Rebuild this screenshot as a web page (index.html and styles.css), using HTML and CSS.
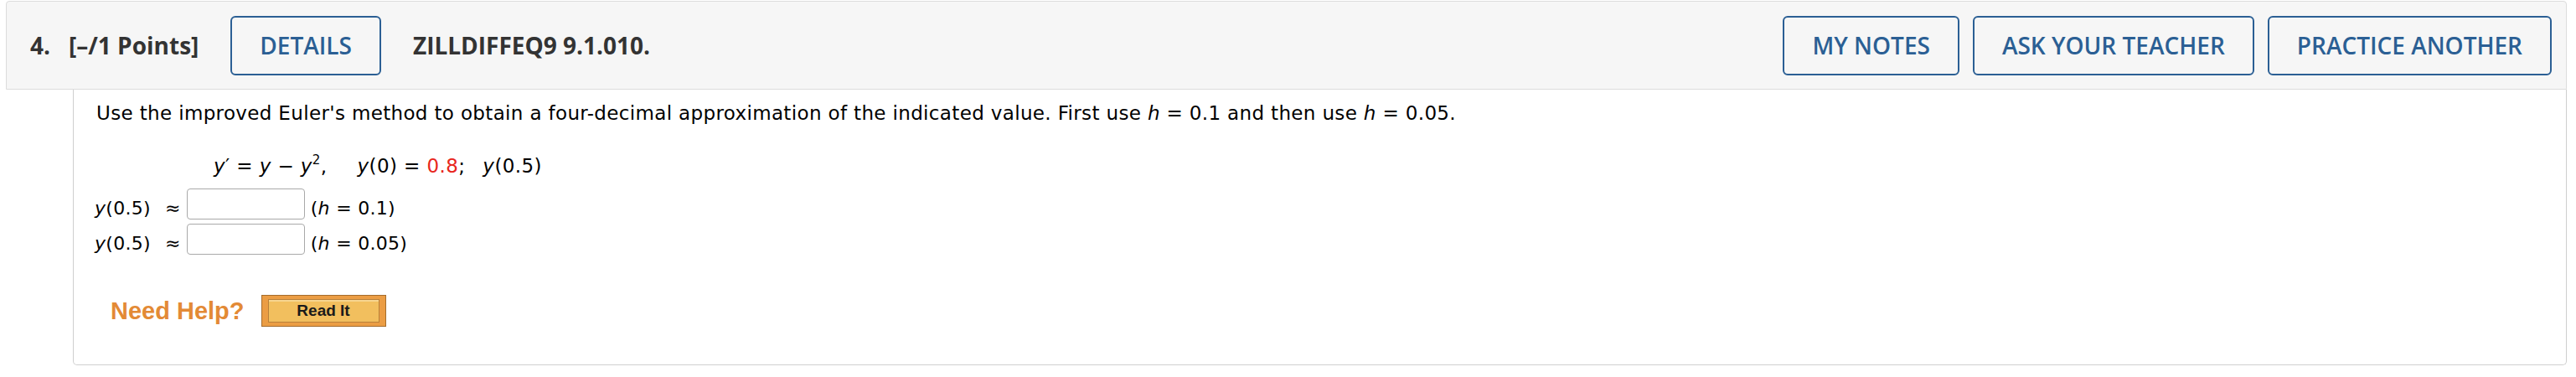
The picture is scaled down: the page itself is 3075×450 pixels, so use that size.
FILE: index.html
```html
<!DOCTYPE html>
<html lang="en">
<head>
<meta charset="utf-8">
<title>Question 4</title>
<link rel="stylesheet" href="styles.css">
</head>
<body>
<div class="page">
  <div class="qhead">
    <div class="qhead-left">
      <span class="qnum">4.</span>
      <span class="qpts">[–/1 Points]</span>
      <button class="qbtn">DETAILS</button>
      <span class="qcode">ZILLDIFFEQ9 9.1.010.</span>
    </div>
    <div class="qhead-right">
      <button class="qbtn">MY NOTES</button>
      <button class="qbtn">ASK YOUR TEACHER</button>
      <button class="qbtn">PRACTICE ANOTHER</button>
    </div>
  </div>
  <div class="qbody">
    <p class="prompt">Use the improved Euler's method to obtain a four-decimal approximation of the indicated value. First use <i>h</i> = 0.1 and then use <i>h</i> = 0.05.</p>
    <div class="eq"><i>y</i>′ = <i>y</i> − <i>y</i><sup>2</sup>,<span class="gap"></span><i>y</i>(0) = <span class="given">0.8</span>;<span class="gap2"></span><i>y</i>(0.5)</div>
    <div class="ans-row">
      <span class="lbl"><i>y</i>(0.5)<span class="approx">≈</span></span>
      <input class="ans" type="text">
      <span class="lbl">(<i>h</i> = 0.1)</span>
    </div>
    <div class="ans-row">
      <span class="lbl"><i>y</i>(0.5)<span class="approx">≈</span></span>
      <input class="ans" type="text">
      <span class="lbl">(<i>h</i> = 0.05)</span>
    </div>
    <div class="help">
      <span class="help-label">Need Help?</span>
      <button class="readit"><span class="readit-in">Read It</span></button>
    </div>
  </div>
</div>
</body>
</html>
```
FILE: styles.css
```css
html, body {
  margin: 0;
  padding: 0;
  background: #ffffff;
}

.page {
  padding: 1px 11px 0 7px;
}

.qhead {
  display: flex;
  justify-content: space-between;
  align-items: center;
  height: 104px;
  padding: 0 17px 0 28px;
  background: #f6f6f6;
  border: 1px solid #dcdcdc;
  border-radius: 4px 4px 0 0;
  font-family: "Open Sans", "Liberation Sans", sans-serif;
}

.qhead-left {
  display: flex;
  align-items: center;
}

.qhead-right {
  display: flex;
  align-items: center;
  gap: 16px;
}

.qnum,
.qpts,
.qcode {
  font-size: 28px;
  font-weight: 700;
  color: #333333;
}

.qpts {
  margin-left: 22px;
  margin-right: 38px;
}

.qcode {
  margin-left: 38px;
}

.qbtn {
  height: 71px;
  padding: 0 33px;
  border: 2px solid #2b5f94;
  border-radius: 6px;
  background: transparent;
  color: #2b5f94;
  font-family: "Open Sans", "Liberation Sans", sans-serif;
  font-size: 28px;
  font-weight: 600;
  line-height: 1;
}

.qbody {
  margin-left: 80px;
  padding: 15px 27px 45px 27px;
  border: 1px solid #cfcfcf;
  border-top: 0;
  border-radius: 0 0 5px 5px;
  font-family: "DejaVu Sans", Verdana, sans-serif;
  color: #000000;
}

.prompt {
  margin: 0;
  font-size: 23px;
  line-height: 26px;
  letter-spacing: 0.35px;
}

.eq {
  margin: 37px 0 0 140px;
  font-size: 23px;
  line-height: 26px;
  letter-spacing: 0.4px;
}

.eq sup {
  font-size: 15px;
  line-height: 0;
  vertical-align: 10px;
}

.gap {
  display: inline-block;
  width: 36px;
}

.gap2 {
  display: inline-block;
  width: 21px;
}

.given {
  color: #e8261c;
}

.ans-row {
  display: flex;
  align-items: flex-end;
  gap: 7px;
  margin-left: -2px;
}

.eq + .ans-row {
  margin-top: 14px;
}

.ans-row + .ans-row {
  margin-top: 5px;
}

.lbl {
  font-size: 22px;
  line-height: 26px;
  letter-spacing: 0.3px;
}

.approx {
  margin-left: 17px;
}

.ans {
  box-sizing: border-box;
  width: 141px;
  height: 37px;
  margin: 0;
  padding: 0 6px;
  border: 1px solid #a9a9a9;
  border-radius: 4px;
  background: #ffffff;
  font-size: 18px;
}

.help {
  display: flex;
  align-items: center;
  gap: 20px;
  margin-top: 48px;
  margin-left: 17px;
}

.help-label {
  font-family: "Liberation Sans", Arial, sans-serif;
  font-size: 29px;
  font-weight: 700;
  color: #e38a35;
}

.readit {
  display: flex;
  align-items: center;
  justify-content: center;
  box-sizing: border-box;
  width: 149px;
  height: 38px;
  padding: 5px 7px;
  border: 1px solid #a46c2c;
  background: #eb9d44;
  cursor: pointer;
}

.readit-in {
  display: flex;
  align-items: center;
  justify-content: center;
  width: 100%;
  height: 100%;
  border: 1px solid #b9813a;
  background: #f2bf5e;
  box-shadow: inset 0 2px 0 #f7d58f;
  font-family: "Liberation Sans", Arial, sans-serif;
  font-size: 19px;
  font-weight: 700;
  color: #1a1a1a;
}
```
